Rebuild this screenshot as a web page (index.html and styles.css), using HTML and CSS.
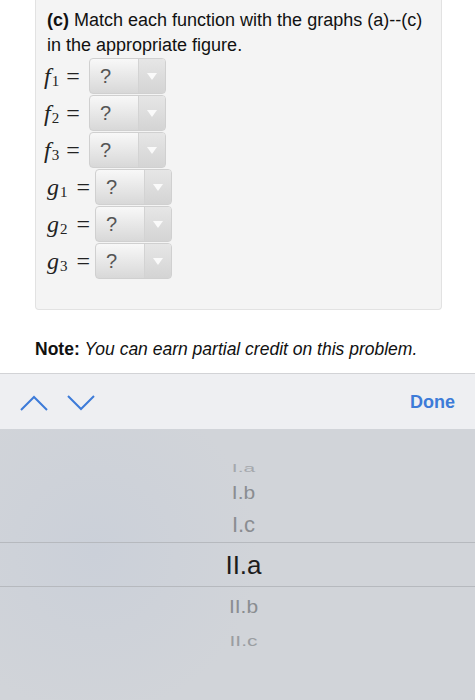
FILE: index.html
```html
<!DOCTYPE html>
<html lang="en">
<head>
    <meta charset="UTF-8">
    <meta name="viewport" content="width=device-width, initial-scale=1.0">
    <title>Match functions</title>
    <link rel="stylesheet" href="styles.css">
</head>
<body>
    <div class="problem-card">
        <p class="question"><b>(c)</b> Match each function with the graphs (a)--(c)<br>in the appropriate figure.</p>

        <div class="answer-row f-row">
            <span class="math"><i>f</i><sub>1</sub><span class="eq">=</span></span>
            <div class="select-box"><span class="select-value">?</span><span class="select-arrow"></span></div>
        </div>
        <div class="answer-row f-row">
            <span class="math"><i>f</i><sub>2</sub><span class="eq">=</span></span>
            <div class="select-box"><span class="select-value">?</span><span class="select-arrow"></span></div>
        </div>
        <div class="answer-row f-row">
            <span class="math"><i>f</i><sub>3</sub><span class="eq">=</span></span>
            <div class="select-box"><span class="select-value">?</span><span class="select-arrow"></span></div>
        </div>
        <div class="answer-row g-row">
            <span class="math"><i>g</i><sub>1</sub><span class="eq">=</span></span>
            <div class="select-box"><span class="select-value">?</span><span class="select-arrow"></span></div>
        </div>
        <div class="answer-row g-row">
            <span class="math"><i>g</i><sub>2</sub><span class="eq">=</span></span>
            <div class="select-box"><span class="select-value">?</span><span class="select-arrow"></span></div>
        </div>
        <div class="answer-row g-row">
            <span class="math"><i>g</i><sub>3</sub><span class="eq">=</span></span>
            <div class="select-box"><span class="select-value">?</span><span class="select-arrow"></span></div>
        </div>
    </div>

    <p class="note"><b>Note:</b> <i>You can earn partial credit on this problem.</i></p>

    <!-- iOS picker keyboard -->
    <div class="picker-toolbar">
        <div class="nav-arrows">
            <svg width="28" height="16" viewBox="0 0 28 16"><polyline points="1,15 14,2 27,15" fill="none" stroke="#3d7bd8" stroke-width="2"/></svg>
            <svg width="28" height="16" viewBox="0 0 28 16"><polyline points="1,1 14,14 27,1" fill="none" stroke="#3d7bd8" stroke-width="2"/></svg>
        </div>
        <span class="done-button">Done</span>
    </div>
    <div class="picker-wheel">
        <div class="wheel-item far">I.a</div>
        <div class="wheel-item near-1">I.b</div>
        <div class="wheel-item near-0">I.c</div>
        <div class="wheel-item selected">II.a</div>
        <div class="wheel-item below-1">II.b</div>
        <div class="wheel-item below-2">II.c</div>
    </div>
</body>
</html>
```

FILE: styles.css
```css
body {
    margin: 0;
    font-family: 'Liberation Sans', Arial, sans-serif;
    background-color: #fff;
    color: #111;
}

.problem-card {
    margin: 0 33px 0 35px;
    padding: 8px 0 29px 11px;
    background-color: #f4f4f4;
    border: 1px solid #e2e2e2;
    border-top: none;
    border-radius: 0 0 4px 4px;
}

.question {
    margin: 0;
    font-size: 18px;
    line-height: 25px;
}

.answer-row {
    display: flex;
    align-items: flex-start;
    height: 37px;
}

.math {
    display: flex;
    align-items: center;
    height: 36px;
    font-family: 'Liberation Serif', 'Times New Roman', serif;
    font-size: 24px;
    color: #222;
}

.math i {
    font-style: italic;
}

.math sub {
    font-size: 15px;
    vertical-align: baseline;
    position: relative;
    top: 5px;
    margin-left: 1px;
}

.eq {
    margin-left: 7px;
}

.f-row .math {
    width: 45px;
    margin-left: -3px;
}

.g-row .math {
    width: 48px;
}

.g-row .eq {
    margin-left: 9px;
}

.select-box {
    display: flex;
    width: 77px;
    height: 36px;
    box-sizing: border-box;
    border: 1px solid #d0d0d0;
    border-radius: 4px;
    background: linear-gradient(#f8f8f8, #d8d8d8);
    overflow: hidden;
}

.select-value {
    flex: 1;
    padding-left: 10px;
    font-size: 20px;
    line-height: 34px;
    color: #555;
}

.select-arrow {
    width: 26px;
    display: flex;
    align-items: center;
    justify-content: center;
    border-left: 1px solid #d3d3d3;
    background: linear-gradient(#e6e6e6, #d4d4d4);
}

.select-arrow::after {
    content: '';
    border-left: 5px solid transparent;
    border-right: 5px solid transparent;
    border-top: 7px solid #fafafa;
}

.note {
    margin: 29px 0 0 35px;
    font-size: 17.5px;
    height: 34px;
}

.picker-toolbar {
    display: flex;
    align-items: center;
    justify-content: space-between;
    height: 55px;
    padding: 0 20px 0 20px;
    background-color: #eeeff2;
    border-top: 1px solid #d2d3d6;
}

.nav-arrows {
    display: flex;
    gap: 19px;
    padding-top: 3px;
}

.done-button {
    color: #3d7bd8;
    font-size: 18px;
    font-weight: bold;
    padding-top: 2px;
}

.picker-wheel {
    background: radial-gradient(circle at 20% 45%, #cbd0d9 0%, #d1d4d9 40%);
    height: 273px;
    padding-top: 31px;
    box-sizing: border-box;
}

.wheel-item {
    text-align: center;
    font-size: 21px;
    color: #8a8d91;
    padding-left: 12px;
}

.wheel-item.far {
    height: 16px;
    line-height: 16px;
    color: #a5a8ad;
    transform: scaleY(0.55);
}

.wheel-item.near-1 {
    height: 34px;
    line-height: 34px;
    transform: scaleY(0.85);
}

.wheel-item.near-0 {
    height: 32px;
    line-height: 30px;
    font-size: 22px;
}

.wheel-item.selected {
    height: 43px;
    line-height: 45px;
    font-size: 26px;
    color: #1c1c1c;
    border-top: 1px solid #b6b9be;
    border-bottom: 1px solid #b6b9be;
}

.wheel-item.below-1 {
    height: 40px;
    line-height: 40px;
    transform: scaleY(0.87);
}

.wheel-item.below-2 {
    height: 28px;
    line-height: 28px;
    color: #9a9da1;
    transform: scaleY(0.68);
}
```
